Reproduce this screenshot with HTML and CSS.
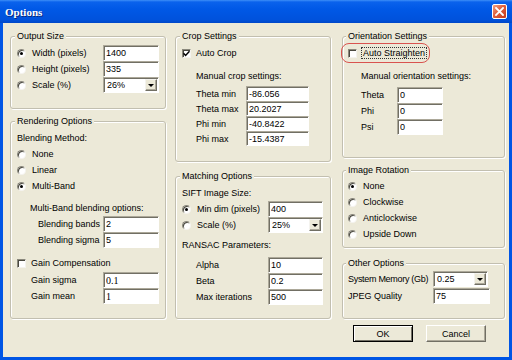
FILE: index.html
```html
<!DOCTYPE html>
<html lang="en">
<head>
    <meta charset="UTF-8">
    <title>Options</title>
    <link rel="stylesheet" href="styles.css">
</head>
<body>
    <div class="window">
        <div class="titlebar">
            <span class="title">Options</span>
            <button class="close" title="Close">
                <svg width="9" height="9" viewBox="0 0 9 9"><path d="M1 1L8 8M8 1L1 8" stroke="#fff" stroke-width="1.8" stroke-linecap="square"/></svg>
            </button>
        </div>
        <div class="client">
            <!-- left column -->
            <div class="col col-left">
                <fieldset class="grp grp-output">
                    <legend>Output Size</legend>
                    <div class="row mt3">
                        <label class="lbl w86"><span class="radio checked"></span>Width (pixels)</label>
                        <input class="edit w56" value="1400">
                    </div>
                    <div class="row">
                        <label class="lbl w86"><span class="radio"></span>Height (pixels)</label>
                        <input class="edit w56" value="335">
                    </div>
                    <div class="row">
                        <label class="lbl w86"><span class="radio"></span>Scale (%)</label>
                        <div class="combo w56"><span>26%</span><span class="drop"></span></div>
                    </div>
                </fieldset>

                <fieldset class="grp grp-render">
                    <legend>Rendering Options</legend>
                    <div class="row mt3">Blending Method:</div>
                    <div class="row"><label class="lbl"><span class="radio"></span>None</label></div>
                    <div class="row"><label class="lbl"><span class="radio"></span>Linear</label></div>
                    <div class="row"><label class="lbl"><span class="radio checked"></span>Multi-Band</label></div>
                    <div class="row mt6 pl13">Multi-Band blending options:</div>
                    <div class="row">
                        <span class="lbl w86 pl21">Blending bands</span>
                        <input class="edit w56" value="2">
                    </div>
                    <div class="row">
                        <span class="lbl w86 pl21">Blending sigma</span>
                        <input class="edit w56" value="5">
                    </div>
                    <div class="row mt7"><label class="lbl"><span class="check"></span>Gain Compensation</label></div>
                    <div class="row mt1">
                        <span class="lbl w86 pl14">Gain sigma</span>
                        <input class="edit w56 serif" value="0.1">
                    </div>
                    <div class="row">
                        <span class="lbl w86 pl14">Gain mean</span>
                        <input class="edit w56 serif" value="1">
                    </div>
                </fieldset>
            </div>

            <!-- middle column -->
            <div class="col col-mid">
                <fieldset class="grp grp-crop">
                    <legend>Crop Settings</legend>
                    <div class="row mt3"><label class="lbl"><span class="check checked"><svg width="7" height="7" viewBox="0 0 7 7"><path d="M0.5 3.2L2.6 5.4L6.5 1.2" fill="none" stroke="#000" stroke-width="1.5"/></svg></span>Auto Crop</label></div>
                    <div class="row mt7 pl14">Manual crop settings:</div>
                    <div class="row r15 mt2">
                        <span class="lbl w64 pl14">Theta min</span>
                        <input class="edit w63" value="-86.056">
                    </div>
                    <div class="row r15">
                        <span class="lbl w64 pl14">Theta max</span>
                        <input class="edit w63" value="20.2027">
                    </div>
                    <div class="row r15">
                        <span class="lbl w64 pl14">Phi min</span>
                        <input class="edit w63" value="-40.8422">
                    </div>
                    <div class="row r15">
                        <span class="lbl w64 pl14">Phi max</span>
                        <input class="edit w63" value="-15.4387">
                    </div>
                </fieldset>

                <fieldset class="grp grp-match">
                    <legend>Matching Options</legend>
                    <div class="row mt3">SIFT Image Size:</div>
                    <div class="row">
                        <label class="lbl w86"><span class="radio checked"></span>Min dim (pixels)</label>
                        <input class="edit w55" value="400">
                    </div>
                    <div class="row">
                        <label class="lbl w86"><span class="radio"></span>Scale (%)</label>
                        <div class="combo w55"><span>25%</span><span class="drop"></span></div>
                    </div>
                    <div class="row mt4">RANSAC Parameters:</div>
                    <div class="row mt4">
                        <span class="lbl w86 pl14">Alpha</span>
                        <input class="edit w55" value="10">
                    </div>
                    <div class="row">
                        <span class="lbl w86 pl14">Beta</span>
                        <input class="edit w55" value="0.2">
                    </div>
                    <div class="row">
                        <span class="lbl w86 pl14">Max iterations</span>
                        <input class="edit w55" value="500">
                    </div>
                </fieldset>
            </div>

            <!-- right column -->
            <div class="col col-right">
                <fieldset class="grp grp-orient">
                    <legend>Orientation Settings</legend>
                    <div class="row mt3 marked">
                        <label class="lbl"><span class="check"></span><span class="focus">Auto Straighten</span></label>
                        <span class="ring"></span>
                    </div>
                    <div class="row mt7 pl13">Manual orientation settings:</div>
                    <div class="row mt3">
                        <span class="lbl w49 pl13">Theta</span>
                        <input class="edit w46" value="0">
                    </div>
                    <div class="row">
                        <span class="lbl w49 pl13">Phi</span>
                        <input class="edit w46" value="0">
                    </div>
                    <div class="row">
                        <span class="lbl w49 pl13">Psi</span>
                        <input class="edit w46" value="0">
                    </div>
                </fieldset>

                <fieldset class="grp grp-rotate">
                    <legend>Image Rotation</legend>
                    <div class="row mt2"><label class="lbl"><span class="radio checked"></span>None</label></div>
                    <div class="row"><label class="lbl"><span class="radio"></span>Clockwise</label></div>
                    <div class="row"><label class="lbl"><span class="radio"></span>Anticlockwise</label></div>
                    <div class="row"><label class="lbl"><span class="radio"></span>Upside Down</label></div>
                </fieldset>

                <fieldset class="grp grp-other">
                    <legend>Other Options</legend>
                    <div class="row mt2">
                        <span class="lbl w85 tight">System Memory (Gb)</span>
                        <div class="combo w55"><span>0.25</span><span class="drop"></span></div>
                    </div>
                    <div class="row mt1">
                        <span class="lbl w85">JPEG Quality</span>
                        <input class="edit w57" value="75">
                    </div>
                </fieldset>

                <div class="buttons">
                    <button class="btn default">OK</button>
                    <button class="btn">Cancel</button>
                </div>
            </div>
        </div>
    </div>
</body>
</html>
```

FILE: styles.css
```css
body {margin: 0; font-family: "Liberation Sans", Arial, sans-serif; font-size: 9px; color: #000;}
.window {width: 512px; height: 360px; box-sizing: border-box; padding: 0 3px 3px; background: #0055e5; display: flex; flex-direction: column;}

/* title bar */
.titlebar {height: 23px; margin: 0 -3px; padding: 0 5px 0 5px; display: flex; align-items: center; justify-content: space-between;
    background: linear-gradient(to bottom, #3d8ff7 0, #0a62ec 2px, #0058e6 40%, #0052dc 85%, #0047c8 100%);}
.title {font-family: "Liberation Serif", serif; font-weight: bold; font-size: 11px; color: #fff; text-shadow: 1px 1px 0 #0a2a80;}
.close {width: 15px; height: 15px; padding: 0; border: 1px solid #fff; border-radius: 2px; display: flex; align-items: center; justify-content: center;
    background: linear-gradient(135deg, #f2a184 0%, #e0603d 45%, #c53a1a 100%);}

/* client area */
.client {flex: 1; background: #ece9d8; display: flex; padding: 8px 4px 0 7px;}
.col {display: flex; flex-direction: column;}
.col-left {width: 156px; margin-right: 9px;}
.col-mid {width: 156px; margin-right: 11px;}
.col-right {width: 163px;}

/* group boxes */
.grp {margin: 0; padding: 0 6px; min-width: 0; box-sizing: border-box; border: 1px solid #c2bfb0; border-radius: 3px; box-shadow: inset 1px 1px 0 #fff, 1px 1px 0 #fff;}
.grp legend {margin-left: -2px; padding: 0 2px; line-height: 11px; background: #ece9d8;}
.col-right .grp {padding: 0 5px;}
.grp-output {height: 78px;}
.grp-render {height: 203px; margin-top: 7px;}
.grp-crop {height: 131px;}
.grp-match {height: 148px; margin-top: 9px;}
.grp-orient {height: 127px;}
.grp-rotate {height: 83px; margin-top: 7px;}
.grp-other {height: 61px; margin-top: 10px;}

/* rows */
.row {display: flex; align-items: center; height: 16px; white-space: nowrap;}
.row.r15 {height: 15px;}
.mt1 {margin-top: 1px;}
.mt2 {margin-top: 2px;}
.mt3 {margin-top: 3px;}
.mt4 {margin-top: 4px;}
.mt6 {margin-top: 6px;}
.mt7 {margin-top: 7px;}
.pl13 {padding-left: 13px;}
.pl14 {padding-left: 14px;}
.pl21 {padding-left: 21px;}
.lbl {flex: none; display: flex; align-items: center; box-sizing: border-box;}
.tight {letter-spacing: -0.3px;}
.w49 {width: 49px;}
.w64 {width: 64px;}
.w85 {width: 85px;}
.w86 {width: 86px;}

/* classic controls */
.radio {width: 9px; height: 9px; margin-right: 6px; box-sizing: border-box; border-radius: 50%; background: #fff; position: relative;
    border: 1px solid; border-color: #8a887c #f4f3ee #f4f3ee #8a887c; box-shadow: inset 1px 1px 0 #4a4940;}
.radio.checked::after {content: ""; position: absolute; left: 2px; top: 2px; width: 3px; height: 3px; border-radius: 50%; background: #000;}
.check {width: 9px; height: 9px; margin-right: 5px; box-sizing: border-box; background: #fff; display: flex; align-items: center; justify-content: center;
    border: 1px solid; border-color: #8a887c #f4f3ee #f4f3ee #8a887c; box-shadow: inset 1px 1px 0 #4a4940;}
.check svg {display: block;}

.edit, .combo {height: 16px; box-sizing: border-box; margin: 0; padding: 0 2px; background: #fff; font: inherit; color: #000;
    border: 1px solid; border-color: #aca899 #fff #fff #aca899; box-shadow: inset 1px 1px 0 #716f64; outline: none;}
.row.r15 .edit {height: 15px;}
.serif {font-family: "Liberation Serif", serif; font-size: 10px;}
.combo {display: flex; align-items: center; justify-content: space-between; padding: 0 1px 0 3px;}
.drop {width: 12px; height: 12px; box-sizing: border-box; background: #ece9d8; position: relative;
    border: 1px solid; border-color: #f4f3ee #716f64 #716f64 #f4f3ee; box-shadow: inset -1px -1px 0 #aca899;}
.drop::after {content: ""; position: absolute; left: 2px; top: 4px; border-left: 3px solid transparent; border-right: 3px solid transparent; border-top: 3px solid #000;}
.w46 {width: 46px;}
.w55 {width: 55px;}
.w56 {width: 56px;}
.w57 {width: 57px;}
.w63 {width: 63px;}

/* annotation around Auto Straighten */
.marked {position: relative;}
.focus {outline: 1px dotted #333; outline-offset: 0; padding: 0 1px;}
.ring {position: absolute; left: -7px; top: -2px; width: 89px; height: 20px; box-sizing: border-box; border: 1.5px solid #d9534f; border-radius: 8px;}

/* buttons */
.buttons {display: flex; gap: 13px; margin: 6px 0 0 11px;}
.btn {width: 60px; height: 17px; padding: 0; font: inherit; color: #000; background: #ece9d8;
    border: 1px solid; border-color: #fff #716f64 #716f64 #fff; box-shadow: inset -1px -1px 0 #aca899;}
.btn.default {border-color: #000; box-shadow: inset 1px 1px 0 #fff, inset -1px -1px 0 #716f64;}
```
